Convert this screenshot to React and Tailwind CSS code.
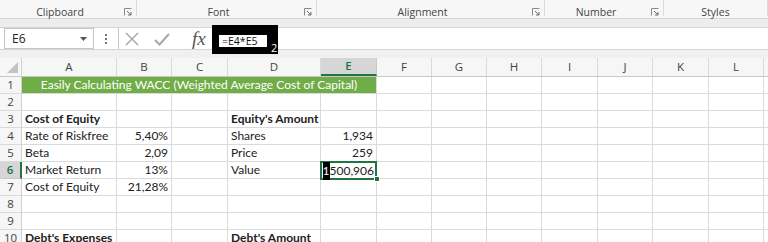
import React from "react";

const cols = [
  { id: "A", w: 95 },
  { id: "B", w: 55 },
  { id: "C", w: 56 },
  { id: "D", w: 93 },
  { id: "E", w: 56 },
  { id: "F", w: 55 },
  { id: "G", w: 55 },
  { id: "H", w: 55 },
  { id: "I", w: 56 },
  { id: "J", w: 55 },
  { id: "K", w: 56 },
  { id: "L", w: 55 },
  { id: "M", w: 55 },
];

const rows = {
  3: { A: { t: "Cost of Equity", b: true }, D: { t: "Equity's Amount", b: true } },
  4: { A: { t: "Rate of Riskfree" }, B: { t: "5,40%", r: true }, D: { t: "Shares" }, E: { t: "1,934", r: true } },
  5: { A: { t: "Beta" }, B: { t: "2,09", r: true }, D: { t: "Price" }, E: { t: "259", r: true } },
  6: { A: { t: "Market Return" }, B: { t: "13%", r: true }, D: { t: "Value" } },
  7: { A: { t: "Cost of Equity" }, B: { t: "21,28%", r: true } },
  10: { A: { t: "Debt's Expenses", b: true }, D: { t: "Debt's Amount", b: true } },
};

const groups = [
  { label: "Clipboard", w: 137, launcher: true },
  { label: "Font", w: 180, launcher: true },
  { label: "Alignment", w: 228, launcher: true },
  { label: "Number", w: 119, launcher: true },
  { label: "Styles", w: 104, launcher: false },
];

function Launcher() {
  return (
    <svg width="8" height="8" viewBox="0 0 8 8" className="shrink-0">
      <path d="M0.5 7.5V0.5H7.5" fill="none" stroke="#8a8a8a" strokeWidth="1" />
      <path d="M3 3L7 7M7 4V7H4" fill="none" stroke="#6a6a6a" strokeWidth="1" />
    </svg>
  );
}

function Cell({ col, row }) {
  const c = rows[row] && rows[row][col.id];
  return (
    <div
      className={`h-[17px] shrink-0 border-r border-b border-[#dadada] px-[3px] flex items-center overflow-visible whitespace-nowrap ${
        c && c.r ? "justify-end" : "justify-start"
      } ${c && c.b ? "font-bold" : ""}`}
      style={{ width: col.w }}
    >
      {c ? c.t : null}
    </div>
  );
}

export default function App() {
  return (
    <div className="w-[768px] h-[242px] overflow-hidden bg-white relative font-['Open_Sans',sans-serif] text-[#222]">
      {/* ribbon group labels */}
      <div className="h-[19px] flex bg-[#f7f7f7] border-b border-[#d6d6d6] text-[10.5px] text-[#444]">
        {groups.map((g) => (
          <div
            key={g.label}
            className="shrink-0 flex items-end h-[16px] border-r border-[#dcdcdc]"
            style={{ width: g.w }}
          >
            <div className="flex-1 text-center leading-[12px] translate-y-[2px]">{g.label}</div>
            {g.launcher && (
              <div className="w-[16px] flex justify-center">
                <Launcher />
              </div>
            )}
          </div>
        ))}
      </div>
      <div className="h-[9px] bg-[#ededed] border-b border-[#d4d4d4]" />

      {/* formula bar */}
      <div className="h-[22px] flex items-stretch bg-white border-b border-[#d4d4d4] relative">
        <div className="ml-[4px] w-[90px] border border-[#c6c6c6] flex items-center justify-between pl-[7px] pr-[6px] text-[12px] text-[#222]">
          <span>E6</span>
          <svg width="7" height="4" viewBox="0 0 7 4">
            <path d="M0 0H7L3.5 4Z" fill="#555" />
          </svg>
        </div>
        <div className="w-[24px] flex flex-col items-center justify-center gap-[2px]">
          <div className="w-[2px] h-[2px] bg-[#777]" />
          <div className="w-[2px] h-[2px] bg-[#777]" />
          <div className="w-[2px] h-[2px] bg-[#777]" />
        </div>
        <div className="flex-1 border-l border-[#c6c6c6] flex items-center">
          <svg width="14" height="14" viewBox="0 0 14 14" className="ml-[6px]">
            <path d="M1 1L13 13M13 1L1 13" stroke="#a0a0a0" strokeWidth="1.3" />
          </svg>
          <svg width="16" height="14" viewBox="0 0 16 14" className="ml-[15px]">
            <path d="M1 8L5.5 12.5L15 2" fill="none" stroke="#a8a8a8" strokeWidth="2" />
          </svg>
          <span className="ml-[22px] font-['Liberation_Serif',serif] italic text-[19px] text-[#555] leading-none">
            fx
          </span>
        </div>
        {/* magnified formula overlay */}
        <div className="absolute left-[212px] top-[-3px] w-[66px] h-[29px] bg-black">
          <div className="absolute left-[6px] top-[9px] w-[50px] h-[14px] bg-white border border-black flex items-center pl-[3px] text-[10.5px] leading-none text-[#111] whitespace-nowrap">
            =E4*E5
          </div>
          <div className="absolute left-[59px] top-[17px] text-[11px] leading-none text-white">2</div>
        </div>
      </div>
      <div className="h-[8px] bg-[#f0f0f0]" />

      {/* sheet */}
      <div className="text-[12px] font-['Lato',sans-serif]">
        <div className="flex h-[19px] bg-[#f6f6f6] border-b border-[#c8c8c8] text-[11.5px] text-[#444] font-['Open_Sans',sans-serif]">
          <div className="w-[22px] shrink-0 border-r border-[#d0d0d0] flex items-end justify-end p-[3px]">
            <svg width="11" height="11" viewBox="0 0 11 11">
              <path d="M11 0V11H0Z" fill="#c3c3c3" />
            </svg>
          </div>
          {cols.map((c) =>
            c.id === "E" ? (
              <div
                key={c.id}
                className="shrink-0 flex items-center justify-center bg-[#d6d6d6] border-b-2 border-[#217346] text-[#217346] font-semibold border-r border-r-[#c8c8c8]"
                style={{ width: c.w }}
              >
                {c.id}
              </div>
            ) : (
              <div
                key={c.id}
                className="shrink-0 flex items-center justify-center border-r border-[#dadada]"
                style={{ width: c.w }}
              >
                {c.id}
              </div>
            )
          )}
        </div>

        {[1, 2, 3, 4, 5, 6, 7, 8, 9, 10].map((r) => (
          <div key={r} className="flex">
            <div
              className={`w-[22px] h-[17px] shrink-0 flex items-center justify-center text-[11.5px] font-['Open_Sans',sans-serif] border-b ${
                r === 6
                  ? "bg-[#d6d6d6] text-[#217346] font-semibold border-r-2 border-r-[#217346] border-b-[#c8c8c8]"
                  : "bg-[#f6f6f6] text-[#444] border-r border-[#d0d0d0] border-b-[#dadada]"
              }`}
            >
              {r}
            </div>
            {r === 1 ? (
              <>
                <div className="w-[355px] h-[17px] shrink-0 bg-[#70ad47] text-white flex items-center justify-center border-r border-b border-[#dadada] whitespace-nowrap">
                  Easily Calculating WACC (Weighted Average Cost of Capital)
                </div>
                {cols.slice(5).map((c) => (
                  <Cell key={c.id} col={c} row={r} />
                ))}
              </>
            ) : (
              cols.map((c) =>
                r === 6 && c.id === "E" ? (
                  <div
                    key={c.id}
                    className="h-[17px] shrink-0 relative border-r border-b border-[#dadada]"
                    style={{ width: c.w }}
                  >
                    <div className="absolute left-[-1px] top-[-1px] w-[57px] h-[19px] border-2 border-[#217346] flex items-center justify-end pr-[1px] whitespace-nowrap">
                      <span className="bg-black text-white">1</span>
                      <span>500,906</span>
                    </div>
                    <div className="absolute right-[-4px] bottom-[-4px] w-[6px] h-[6px] bg-[#217346] border border-white" />
                  </div>
                ) : (
                  <Cell key={c.id} col={c} row={r} />
                )
              )
            )}
          </div>
        ))}
      </div>
    </div>
  );
}
